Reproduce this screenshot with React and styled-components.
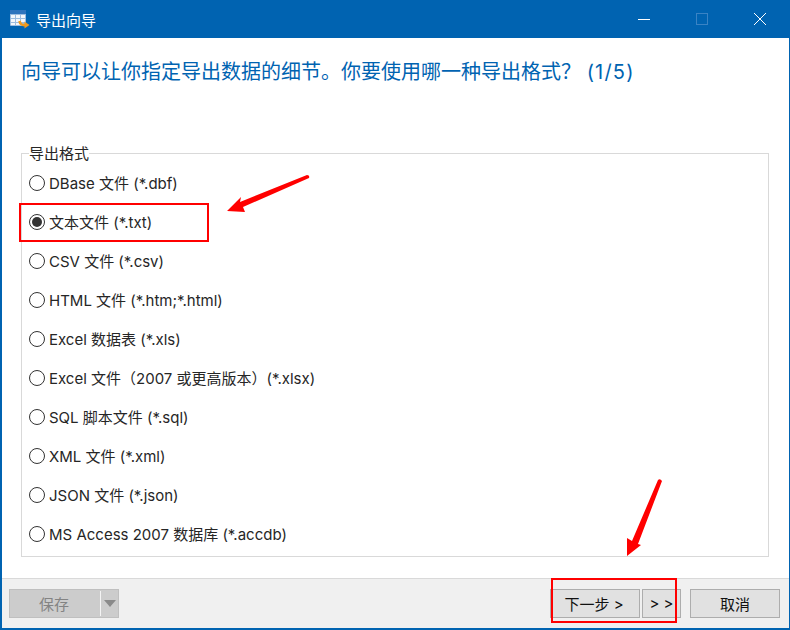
import React from "react";
import styled, { createGlobalStyle } from "styled-components";

const GlobalStyle = createGlobalStyle`
  html, body { margin: 0; padding: 0; background: #fff; }
  body { font-family: Inter, "Noto Sans CJK SC", sans-serif; }
`;

const Win = styled.div`
  position: relative;
  box-sizing: border-box;
  width: 790px;
  height: 630px;
  display: flex;
  flex-direction: column;
  border: solid #0063b1;
  border-width: 0 1px 2px 2px;
  background: #fff;
  overflow: hidden;
`;

const TitleBar = styled.div`
  height: 38px;
  flex: none;
  display: flex;
  align-items: center;
  background: #0063b1;
  color: #fff;
  padding-left: 8px;
`;

const TitleText = styled.span`
  margin-left: 6px;
  font-size: 15px;
`;

const Controls = styled.div`
  margin-left: auto;
  display: flex;
  height: 100%;
`;

const Ctl = styled.div`
  width: 58px;
  display: flex;
  align-items: center;
  justify-content: center;
`;

const Body = styled.div`
  flex: 1;
  display: flex;
  flex-direction: column;
  padding: 0 20px 21px 19px;
`;

const Heading = styled.h1`
  margin: 20px 0 0;
  font-size: 20px;
  font-weight: 400;
  line-height: 28px;
  color: #0063b1;
`;

const Step = styled.span`
  letter-spacing: 1.2px;
`;

const Group = styled.fieldset`
  flex: 1;
  margin: 58px 0 0;
  padding: 0 0 0 7px;
  border: 1px solid #d9d9d9;
  min-width: 0;
  display: flex;
  flex-direction: column;
`;

const Legend = styled.legend`
  padding: 2px 0 0;
  font-size: 15px;
  line-height: 16px;
  color: #262626;
`;

const Option = styled.label`
  height: 39px;
  display: flex;
  align-items: center;
  gap: 4px;
  font-size: 15px;
  color: #262626;
`;

const RadioMark = styled.span`
  box-sizing: border-box;
  width: 16px;
  height: 16px;
  border-radius: 50%;
  border: 1px solid #333;
  background: #fff;
  display: flex;
  align-items: center;
  justify-content: center;

  &::after {
    content: "";
    width: 10px;
    height: 10px;
    border-radius: 50%;
    background: ${(p) => (p.$on ? "#333" : "transparent")};
  }
`;

const Options = styled.div`
  margin-top: 1px;
  display: flex;
  flex-direction: column;
`;

const Footer = styled.div`
  flex: none;
  height: 50px;
  box-sizing: border-box;
  border-top: 1px solid #d9d9d9;
  background: #f0f0f0;
  display: flex;
  align-items: flex-start;
  padding: 10px 9px 0 7px;
`;

const SaveBtn = styled.div`
  box-sizing: border-box;
  width: 110px;
  height: 29px;
  display: flex;
  align-items: center;
  background: #cccccc;
  border: 1px solid #bfbfbf;
  color: #838383;
  font-size: 15px;
`;

const SaveLabel = styled.span`
  width: 90px;
  padding-right: 2px;
  box-sizing: border-box;
  text-align: center;
`;

const SaveSplit = styled.span`
  width: 1px;
  height: 25px;
  background: #f4f4f4;
`;

const SaveCaret = styled.span`
  margin-left: 3px;
  width: 0;
  height: 0;
  border-left: 6px solid transparent;
  border-right: 6px solid transparent;
  border-top: 7px solid #8a8a8a;
`;

const Right = styled.div`
  margin-left: auto;
  display: flex;
`;

const Btn = styled.button`
  box-sizing: border-box;
  width: ${(p) => p.$w}px;
  height: 29px;
  margin-left: ${(p) => p.$gap}px;
  padding: 0 ${(p) => p.$pr || 0}px 0 0;
  background: #e1e1e1;
  border: 1px solid #adadad;
  color: #111;
  font-family: inherit;
  font-size: 15px;
`;

const Mark = styled.div`
  position: absolute;
  box-sizing: border-box;
  left: ${(p) => p.$x}px;
  top: ${(p) => p.$y}px;
  width: ${(p) => p.$w}px;
  height: ${(p) => p.$h}px;
  border: 2px solid #f00;
  pointer-events: none;
`;

const Arrows = styled.svg`
  position: absolute;
  left: -2px;
  top: 0;
  pointer-events: none;
`;

const formats = [
  "DBase 文件 (*.dbf)",
  "文本文件 (*.txt)",
  "CSV 文件 (*.csv)",
  "HTML 文件 (*.htm;*.html)",
  "Excel 数据表 (*.xls)",
  "Excel 文件（2007 或更高版本）(*.xlsx)",
  "SQL 脚本文件 (*.sql)",
  "XML 文件 (*.xml)",
  "JSON 文件 (*.json)",
  "MS Access 2007 数据库 (*.accdb)",
];

function AppIcon() {
  return (
    <svg width="20" height="20" viewBox="0 0 20 20">
      <rect x="0" y="1" width="16" height="16" rx="1" fill="#9dbde0" />
      <rect x="0" y="1" width="16" height="4" fill="#2f74bd" />
      <g fill="#f4f7fb">
        <rect x="1" y="6" width="4" height="3" />
        <rect x="6" y="6" width="4" height="3" />
        <rect x="11" y="6" width="4" height="3" />
        <rect x="1" y="10" width="4" height="3" />
        <rect x="6" y="10" width="4" height="3" />
        <rect x="11" y="10" width="4" height="3" />
        <rect x="1" y="14" width="4" height="2" />
        <rect x="6" y="14" width="4" height="2" />
      </g>
      <path d="M9.5 12 C10 15.5 12.5 16.5 15.5 16" fill="none" stroke="#f09a1e" strokeWidth="2.6" />
      <path d="M14.5 12.5 L19.5 16 L14.5 19.5 Z" fill="#f09a1e" />
    </svg>
  );
}

export default function App() {
  return (
    <>
      <GlobalStyle />
      <Win>
        <TitleBar>
          <AppIcon />
          <TitleText>导出向导</TitleText>
          <Controls>
            <Ctl>
              <svg width="12" height="12" viewBox="0 0 12 12">
                <path d="M0 6.5H12" stroke="#fff" strokeWidth="1" />
              </svg>
            </Ctl>
            <Ctl>
              <svg width="12" height="12" viewBox="0 0 12 12">
                <rect x="0.5" y="0.5" width="11" height="11" fill="none" stroke="#3a83c4" />
              </svg>
            </Ctl>
            <Ctl>
              <svg width="12" height="12" viewBox="0 0 12 12">
                <path d="M0 0L12 12M12 0L0 12" stroke="#fff" strokeWidth="1" />
              </svg>
            </Ctl>
          </Controls>
        </TitleBar>
        <Body>
          <Heading>
            向导可以让你指定导出数据的细节。你要使用哪一种导出格式？ <Step>(1/5)</Step>
          </Heading>
          <Group>
            <Legend>导出格式</Legend>
            <Options>
              {formats.map((f, i) => (
                <Option key={f}>
                  <RadioMark $on={i === 1} />
                  {f}
                </Option>
              ))}
            </Options>
          </Group>
        </Body>
        <Footer>
          <SaveBtn>
            <SaveLabel>保存</SaveLabel>
            <SaveSplit />
            <SaveCaret />
          </SaveBtn>
          <Right>
            <Btn $w={90} $pr={2}>下一步 &gt;</Btn>
            <Btn $w={39} $gap={2}>&gt; &gt;</Btn>
            <Btn $w={90} $gap={9}>取消</Btn>
          </Right>
        </Footer>
        <Mark $x={17} $y={203} $w={190} $h={39} />
        <Mark $x={549} $y={578} $w={126} $h={45} />
        <Arrows width="790" height="630" viewBox="0 0 790 630">
          <path d="M227 211L241 197L240 202L307 175Q310 175 309 178L243 207L245 212Z" fill="#f00" />
          <path d="M627 556L627 538L632 541L658 480Q660 478 662 481L638 544L641 545Z" fill="#f00" />
        </Arrows>
      </Win>
    </>
  );
}
